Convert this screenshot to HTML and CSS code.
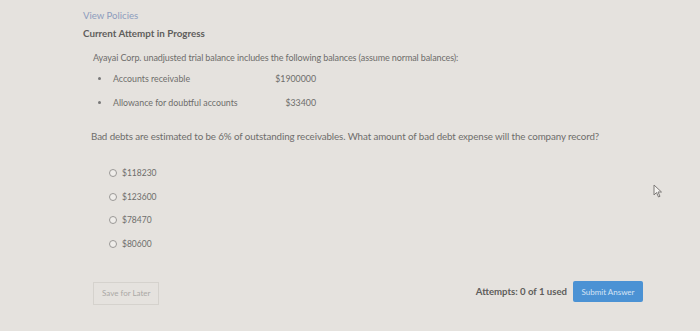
FILE: index.html
```html
<!DOCTYPE html>
<html>
<head>
<meta charset="utf-8">
<link rel="stylesheet" href="styles.css">
</head>
<body>
<div class="page">
  <div class="policies">View Policies</div>
  <div class="title">Current Attempt in Progress</div>
  <div class="question">
    <p class="intro">Ayayai Corp. unadjusted trial balance includes the following balances (assume normal balances):</p>
    <ul class="balances">
      <li><span class="label">Accounts receivable</span><span class="amount">$1900000</span></li>
      <li><span class="label">Allowance for doubtful accounts</span><span class="amount">$33400</span></li>
    </ul>
    <p class="ask">Bad debts are estimated to be 6% of outstanding receivables. What amount of bad debt expense will the company record?</p>
    <div class="choices">
      <label class="choice"><span class="radio"></span>$118230</label>
      <label class="choice"><span class="radio"></span>$123600</label>
      <label class="choice"><span class="radio"></span>$78470</label>
      <label class="choice"><span class="radio"></span>$80600</label>
    </div>
  </div>
  <div class="footer">
    <button class="save">Save for Later</button>
    <div class="submit-group">
      <span class="attempts">Attempts: 0 of 1 used</span>
      <button class="submit">Submit Answer</button>
    </div>
  </div>
</div>
<svg class="cursor" width="10" height="14" viewBox="0 0 10 14"><path d="M1 1 L1 11 L3.5 8.5 L5.5 13 L7 12.3 L5 8 L8.5 8 Z" fill="#f4f2ef" stroke="#7d7a78" stroke-width="1"/></svg>
</body>
</html>
```
FILE: styles.css
```css
html, body {
  margin: 0;
  padding: 0;
}
body {
  width: 700px;
  height: 331px;
  background: #e5e2de;
  font-family: Lato, "Open Sans", sans-serif;
  color: #6e6d6b;
  overflow: hidden;
  position: relative;
}
.page {
  padding: 10px 0 0 83px;
  width: 560px;
}
.policies {
  font-size: 9.6px;
  color: #8c9cbd;
  line-height: 12px;
}
.title {
  font-size: 9.8px;
  font-weight: bold;
  color: #5f5e5c;
  margin-top: 5px;
  line-height: 12px;
}
.question {
  padding-left: 10px;
}
.intro {
  font-size: 9px;
  margin: 14px 0 0;
  line-height: 10px;
  letter-spacing: -0.1px;
}
.balances {
  list-style: none;
  margin: 3px 0 0;
  padding: 0 0 0 5px;
  font-size: 8.8px;
}
.balances li {
  display: flex;
  align-items: center;
  height: 24px;
}
.balances li::before {
  content: "";
  width: 3px;
  height: 3px;
  border-radius: 50%;
  background: #777;
  margin-right: 12px;
}
.balances .label {
  width: 158px;
}
.balances .amount {
  width: 45px;
  text-align: right;
}
.ask {
  font-size: 9.75px;
  margin: 17px 0 0 -2px;
  line-height: 10px;
  letter-spacing: -0.1px;
}
.choices {
  display: flex;
  flex-direction: column;
  margin-top: 20px;
  padding-left: 16px;
}
.choice {
  display: flex;
  align-items: center;
  font-size: 8.5px;
  height: 23.7px;
}
.radio {
  width: 6px;
  height: 6px;
  border: 1px solid #9a9896;
  border-radius: 50%;
  background: #efedea;
  margin-right: 5px;
}
.footer {
  display: flex;
  justify-content: space-between;
  align-items: center;
  margin-top: 26px;
  padding-left: 10px;
}
.save {
  font-family: inherit;
  font-size: 8px;
  color: #aaa8a5;
  background: transparent;
  border: 1px solid #d5d2cd;
  height: 23px;
  padding: 0 8px;
}
.submit-group {
  display: flex;
  align-items: center;
  gap: 6px;
  margin-top: -3px;
}
.attempts {
  font-size: 9.6px;
  font-weight: bold;
  color: #5e5d5b;
}
.submit {
  font-family: inherit;
  font-size: 8px;
  color: #d6e4f4;
  background: #4b92d4;
  border: none;
  border-radius: 2px;
  height: 21px;
  width: 70px;
  padding: 0;
}
.cursor {
  position: absolute;
  left: 653px;
  top: 184px;
}
```
